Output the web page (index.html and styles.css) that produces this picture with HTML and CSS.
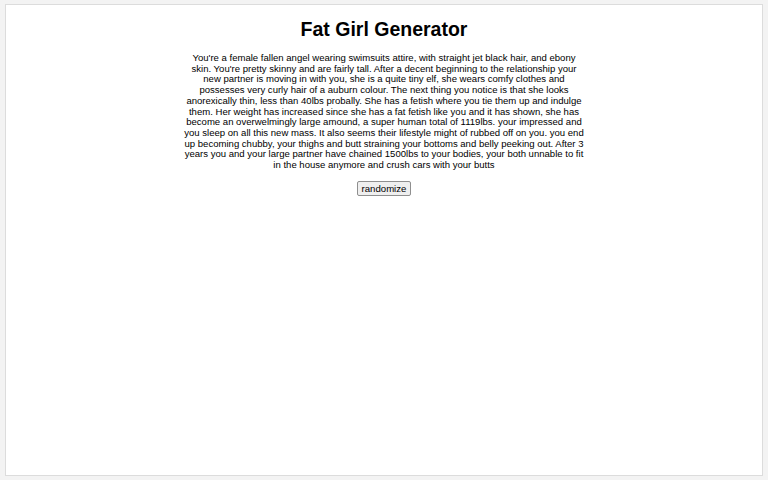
FILE: index.html
```html
<!DOCTYPE html>
<html>
<head>
<meta charset="utf-8">
<title>Fat Girl Generator</title>
<link rel="stylesheet" href="styles.css">
</head>
<body>
<main class="card">
  <h1 class="title">Fat Girl Generator</h1>
  <p class="story">You're a female fallen angel wearing swimsuits attire, with straight jet black hair, and ebony skin. You're pretty skinny and are fairly tall. After a decent beginning to the relationship your new partner is moving in with you, she is a quite tiny elf, she wears comfy clothes and possesses very curly hair of a auburn colour. The next thing you notice is that she looks anorexically thin, less than 40lbs probally. She has a fetish where you tie them up and indulge them. Her weight has increased since she has a fat fetish like you and it has shown, she has become an overwelmingly large amound, a super human total of 1119lbs. your impressed and you sleep on all this new mass. It also seems their lifestyle might of rubbed off on you. you end up becoming chubby, your thighs and butt straining your bottoms and belly peeking out. After 3 years you and your large partner have chained 1500lbs to your bodies, your both unnable to fit in the house anymore and crush cars with your butts</p>
  <button class="btn" type="button">randomize</button>
</main>
</body>
</html>
```
FILE: styles.css
```css
html, body {
  margin: 0;
  padding: 0;
  background: #f3f3f3;
  font-family: "Liberation Sans", Arial, sans-serif;
}

body {
  padding: 4px 5px 4px 5px;
  height: 480px;
  box-sizing: border-box;
}

.card {
  height: 100%;
  box-sizing: border-box;
  background: #fff;
  border: 1px solid #dcdcdc;
  display: flex;
  flex-direction: column;
  align-items: center;
  color: #000;
}

.title {
  margin: 12px 0 0;
  font-size: 19.5px;
  font-weight: bold;
  line-height: 24px;
}

.story {
  width: 404px;
  margin: 12px 0 0;
  font-size: 9.55px;
  line-height: 10.7px;
  text-align: center;
}

.btn {
  margin-top: 10px;
  font-family: "Liberation Sans", Arial, sans-serif;
  font-size: 9.6px;
  padding: 1px 4px;
  background: #efefef;
  border: 1px solid #8f8f8f;
  border-radius: 2px;
  color: #000;
}
```
